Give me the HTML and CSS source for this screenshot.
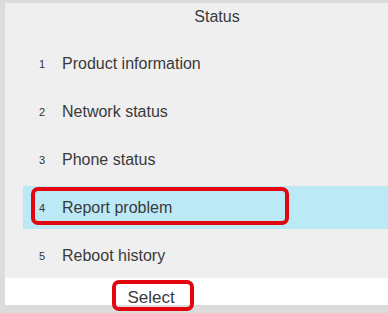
FILE: index.html
```html
<!DOCTYPE html>
<html lang="en">
<head>
  <meta charset="UTF-8">
  <title>Status</title>
  <link rel="stylesheet" href="styles.css">
</head>
<body>

  <div class="screen">
    <!-- Menu panel -->
    <div class="panel">
      <div class="title">Status</div>
      <ul class="menu">
        <li class="item"><span class="num">1</span>Product information</li>
        <li class="item"><span class="num">2</span>Network status</li>
        <li class="item"><span class="num">3</span>Phone status</li>
        <li class="item selected"><span class="num">4</span>Report problem<span class="mark"></span></li>
        <li class="item"><span class="num">5</span>Reboot history</li>
      </ul>
    </div>

    <!-- Softkeys -->
    <div class="softkeys">
      <span class="softkey">Select</span>
    </div>
  </div>

</body>
</html>
```

FILE: styles.css
```css
* {
  box-sizing: border-box;
}

body {
  margin: 0;
  font-family: 'Liberation Sans', Arial, sans-serif;
  background: #dcdcdc;
  color: #3a3a3a;
  overflow: hidden;
}

.screen {
  height: 313px;
  padding: 3px 0 0 5px;
}

.panel {
  height: 275px;
  background: #efefef;
}

.title {
  padding: 5px 0 0 41px;
  height: 39px;
  font-size: 16px;
  line-height: 18px;
  text-align: center;
}

.menu {
  list-style: none;
  margin: 0 0 0 18px;
  padding: 0;
  display: flex;
  flex-direction: column;
  gap: 5px;
}

.item {
  position: relative;
  display: flex;
  align-items: center;
  height: 43px;
  padding-left: 16px;
  font-size: 16px;
}

.num {
  width: 23px;
  font-size: 11px;
  color: #333;
}

.selected {
  background: #bce9f6;
}

.mark {
  position: absolute;
  left: 8px;
  top: 1px;
  width: 258px;
  height: 38px;
  border: 4px solid #e3060f;
  border-radius: 7px;
}

.softkeys {
  height: 27px;
  background: #fff;
  display: flex;
  align-items: flex-start;
  padding: 2px 0 0 107px;
}

.softkey {
  width: 82px;
  height: 31px;
  border: 4px solid #e3060f;
  border-radius: 7px;
  padding: 4px 4px 0 0;
  font-size: 17px;
  line-height: 20px;
  text-align: center;
}
```
